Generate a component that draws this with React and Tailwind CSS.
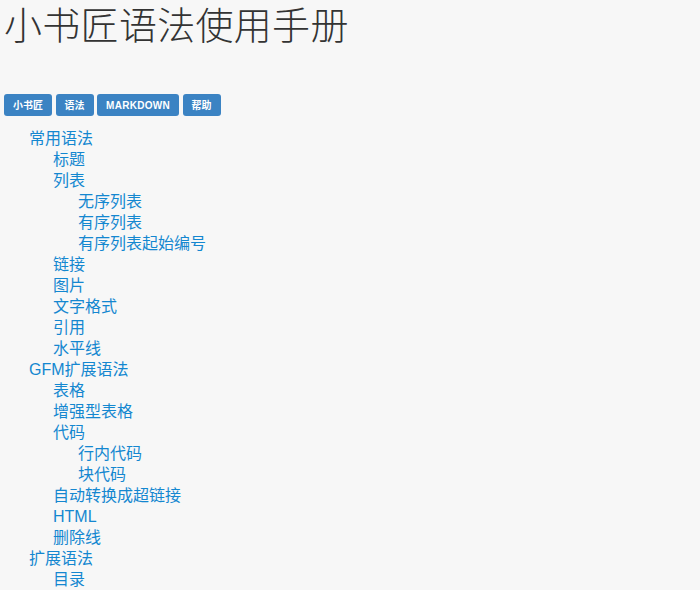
const TOC = [
  {
    title: '常用语法',
    children: [
      { title: '标题' },
      {
        title: '列表',
        children: [{ title: '无序列表' }, { title: '有序列表' }, { title: '有序列表起始编号' }],
      },
      { title: '链接' },
      { title: '图片' },
      { title: '文字格式' },
      { title: '引用' },
      { title: '水平线' },
    ],
  },
  {
    title: 'GFM扩展语法',
    children: [
      { title: '表格' },
      { title: '增强型表格' },
      { title: '代码', children: [{ title: '行内代码' }, { title: '块代码' }] },
      { title: '自动转换成超链接' },
      { title: 'HTML' },
      { title: '删除线' },
    ],
  },
  {
    title: '扩展语法',
    children: [{ title: '目录' }],
  },
]

const TAGS = ['小书匠', '语法', 'MARKDOWN', '帮助']

function TocList({ items, level }) {
  const pad = level === 0 ? 'pl-[29px]' : level === 1 ? 'pl-[24px]' : 'pl-[25px]'
  return (
    <ul className={pad}>
      {items.map((item) => (
        <li key={item.title}>
          <a href="#" className="block leading-[21px] text-[#1487d0]">
            {item.title}
          </a>
          {item.children && <TocList items={item.children} level={level + 1} />}
        </li>
      ))}
    </ul>
  )
}

export default function App() {
  return (
    <div
      className="min-h-[590px] bg-[#f7f7f7] text-[16px]"
      style={{ fontFamily: '"Liberation Sans", "Noto Sans CJK SC", sans-serif' }}
    >
      <h1 className="pl-[4px] pt-[4px] text-[38px] font-light leading-[44px] tracking-[0.3px] text-[#333]">
        小书匠语法使用手册
      </h1>

      {/* tags */}
      <div className="mt-[46px] flex gap-[3.5px] pl-[4px]">
        {TAGS.map((t) => (
          <span
            key={t}
            className={`flex h-[22px] items-center rounded-[3px] bg-[#3b83c3] px-[9px] text-[10px] font-bold text-white ${
              t === 'MARKDOWN' ? 'tracking-[0.3px]' : ''
            }`}
          >
            {t}
          </span>
        ))}
      </div>

      <div className="mt-[12px]">
        <TocList items={TOC} level={0} />
      </div>
    </div>
  )
}
